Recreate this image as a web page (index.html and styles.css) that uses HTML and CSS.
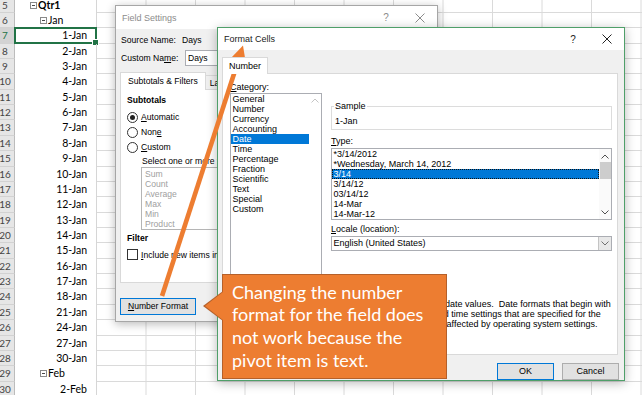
FILE: index.html
```html
<!DOCTYPE html>
<html>
<head>
<meta charset="utf-8">
<title>Format Cells</title>
<link rel="stylesheet" href="styles.css">
</head>
<body>
<div class="sheet">
  <div class="row"><div class="rh">5</div><div class="ca lvl0"><i class="mbox"></i><b>Qtr1</b></div><div class="rest"></div></div>
  <div class="row"><div class="rh">6</div><div class="ca lvl1"><i class="mbox"></i>Jan</div><div class="rest"></div></div>
  <div class="row"><div class="rh sel">7</div><div class="ca sel">1-Jan</div><div class="rest"></div></div>
  <div class="row"><div class="rh">8</div><div class="ca">2-Jan</div><div class="rest"></div></div>
  <div class="row"><div class="rh">9</div><div class="ca">3-Jan</div><div class="rest"></div></div>
  <div class="row"><div class="rh">10</div><div class="ca">4-Jan</div><div class="rest"></div></div>
  <div class="row"><div class="rh">11</div><div class="ca">5-Jan</div><div class="rest"></div></div>
  <div class="row"><div class="rh">12</div><div class="ca">6-Jan</div><div class="rest"></div></div>
  <div class="row"><div class="rh">13</div><div class="ca">7-Jan</div><div class="rest"></div></div>
  <div class="row"><div class="rh">14</div><div class="ca">8-Jan</div><div class="rest"></div></div>
  <div class="row"><div class="rh">15</div><div class="ca">9-Jan</div><div class="rest"></div></div>
  <div class="row"><div class="rh">16</div><div class="ca">10-Jan</div><div class="rest"></div></div>
  <div class="row"><div class="rh">17</div><div class="ca">11-Jan</div><div class="rest"></div></div>
  <div class="row"><div class="rh">18</div><div class="ca">12-Jan</div><div class="rest"></div></div>
  <div class="row"><div class="rh">19</div><div class="ca">13-Jan</div><div class="rest"></div></div>
  <div class="row"><div class="rh">20</div><div class="ca">14-Jan</div><div class="rest"></div></div>
  <div class="row"><div class="rh">21</div><div class="ca">15-Jan</div><div class="rest"></div></div>
  <div class="row"><div class="rh">22</div><div class="ca">16-Jan</div><div class="rest"></div></div>
  <div class="row"><div class="rh">23</div><div class="ca">17-Jan</div><div class="rest"></div></div>
  <div class="row"><div class="rh">24</div><div class="ca">18-Jan</div><div class="rest"></div></div>
  <div class="row"><div class="rh">25</div><div class="ca">21-Jan</div><div class="rest"></div></div>
  <div class="row"><div class="rh">26</div><div class="ca">24-Jan</div><div class="rest"></div></div>
  <div class="row"><div class="rh">27</div><div class="ca">27-Jan</div><div class="rest"></div></div>
  <div class="row"><div class="rh">28</div><div class="ca">30-Jan</div><div class="rest"></div></div>
  <div class="row"><div class="rh">29</div><div class="ca lvl1"><i class="mbox"></i>Feb</div><div class="rest"></div></div>
  <div class="row"><div class="rh">30</div><div class="ca">2-Feb</div><div class="rest"></div></div>
</div>

<section class="dlg fs">
  <header class="tb">
    <span class="ttl">Field Settings</span>
    <span class="tbtn">?</span>
    <span class="tbtn"><svg width="10" height="10" viewBox="0 0 10 10"><path d="M0.5 0.5L9.5 9.5M9.5 0.5L0.5 9.5" stroke="#8c8c8c" stroke-width="1" fill="none"/></svg></span>
  </header>
  <div class="fsbody">
    <div class="fld"><span class="lbl src">Source Name:</span><span>Days</span></div>
    <div class="fld cn"><span class="lbl cus">Custom Na<u>m</u>e:</span><span class="tbox">Days</span></div>
    <div class="tabs"><span class="tab on">Subtotals &amp; Filters</span><span class="tab">Layout &amp; Print</span></div>
    <div class="panel fsp">
      <div class="hd">Subtotals</div>
      <div class="radio on"><i></i><span><u>A</u>utomatic</span></div>
      <div class="radio"><i></i><span>Non<u>e</u></span></div>
      <div class="radio"><i></i><span><u>C</u>ustom</span></div>
      <div class="sel1">Select one or more functions:</div>
      <ul class="flist">
        <li>Sum</li><li>Count</li><li>Average</li><li>Max</li><li>Min</li><li>Product</li>
      </ul>
      <div class="hd flt">Filter</div>
      <div class="chk"><i></i><span><u>I</u>nclude new items in manual filter</span></div>
    </div>
    <button class="btn focus nf"><u>N</u>umber Format</button>
  </div>
</section>

<section class="dlg fc">
  <header class="tb">
    <span class="ttl">Format Cells</span>
    <span class="tbtn">?</span>
    <span class="tbtn"><svg width="10" height="10" viewBox="0 0 10 10"><path d="M0.5 0.5L9.5 9.5M9.5 0.5L0.5 9.5" stroke="#222" stroke-width="1" fill="none"/></svg></span>
  </header>
  <div class="fcbody">
    <div class="tabs"><span class="tab on">Number</span></div>
    <div class="panel fcp">
      <div class="top">
        <div class="lcol">
          <div class="lbl"><u>C</u>ategory:</div>
          <div class="lb cat">
            <ul>
              <li>General</li><li>Number</li><li>Currency</li><li>Accounting</li>
              <li class="hi">Date</li><li>Time</li><li>Percentage</li><li>Fraction</li>
              <li>Scientific</li><li>Text</li><li>Special</li><li>Custom</li>
            </ul>
            <div class="sb dis">
              <svg class="chev" width="8" height="5" viewBox="0 0 8 5"><path d="M0.5 4.5L4 1L7.5 4.5" stroke="#c4c4c4" fill="none"/></svg>
            </div>
          </div>
        </div>
        <div class="rcol">
          <fieldset class="sample"><legend>Sample</legend><div class="sv">1-Jan</div></fieldset>
          <div class="lbl tlbl"><u>T</u>ype:</div>
          <div class="lb types">
            <ul>
              <li>*3/14/2012</li>
              <li>*Wednesday, March 14, 2012</li>
              <li class="hi foc">3/14</li>
              <li>3/14/12</li>
              <li>03/14/12</li>
              <li>14-Mar</li>
              <li>14-Mar-12</li>
            </ul>
            <div class="sb">
              <svg class="chev" width="8" height="5" viewBox="0 0 8 5"><path d="M0.5 4.5L4 1L7.5 4.5" stroke="#505050" fill="none"/></svg>
              <div class="thumb"></div>
              <svg class="chev dn" width="8" height="5" viewBox="0 0 8 5"><path d="M0.5 0.5L4 4L7.5 0.5" stroke="#505050" fill="none"/></svg>
            </div>
          </div>
          <div class="lbl llbl"><u>L</u>ocale (location):</div>
          <div class="combo">
            <span class="cv">English (United States)</span>
            <span class="dd"><svg width="8" height="5" viewBox="0 0 8 5"><path d="M0.5 0.5L4 4L7.5 0.5" stroke="#707070" fill="none"/></svg></span>
          </div>
        </div>
      </div>
      <p class="desc">Date formats display date and time serial numbers as date values.&nbsp; Date formats that begin with<br>an asterisk (*) respond to changes in regional date and time settings that are specified for the<br>operating system. Formats without an asterisk are not affected by operating system settings.</p>
    </div>
    <div class="btns"><button class="btn focus">OK</button><button class="btn">Cancel</button></div>
  </div>
</section>

<svg class="arrow" width="642" height="395" viewBox="0 0 642 395">
  <line x1="162" y1="296" x2="238.4" y2="60.3" stroke="#ED7D31" stroke-width="4.6"/>
  <polygon points="243,45.5 245.8,62.8 231,58" fill="#ED7D31"/>
</svg>

<div class="callout">Changing the number format for the field does not work because the pivot item is text.</div>
</body>
</html>
```

FILE: styles.css
```css
* { box-sizing: border-box; margin: 0; padding: 0; }
html, body { width: 642px; height: 395px; overflow: hidden; background: #fff; }
body { position: relative; font-family: "Liberation Sans", Arial, sans-serif; color: #000; }

/* ---------- spreadsheet ---------- */
.sheet { margin-top: -2.4px; }
.row { display: flex; height: 15.36px; }
.rh {
  flex: none; width: 19px; margin-left: -4px;
  background: #e6e6e6; border-right: 1px solid #bcbcbc; border-bottom: 1px solid #d2d2d2;
  font: 10px/14.5px Lato, sans-serif; color: #444; text-align: center;
}
.rh.sel { background: #d3d3d3; color: #217346; }
.ca {
  flex: none; width: 82px; position: relative;
  border-right: 1px solid #d6d6d6;
  font: 10.5px/15.36px Lato, sans-serif; color: #000;
  text-align: right; padding-right: 9px; white-space: nowrap;
}
.ca.lvl0, .ca.lvl1 { display: flex; align-items: center; text-align: left; }
.ca.lvl0 { padding-left: 14.5px; }
.ca.lvl1 { padding-left: 24.5px; }
.mbox {
  display: inline-block; position: relative; width: 7px; height: 7px;
  border: 1px solid #8a8a8a; background: #fff; margin-right: 1.5px;
}
.mbox::after { content: ""; position: absolute; left: 1px; top: 2px; width: 3px; height: 1px; background: #4a4a4a; }
.ca.sel::before {
  content: ""; position: absolute; left: -1px; top: -1.5px; right: -1px; bottom: -0.5px;
  border: 2px solid #217346;
}
.ca.sel::after {
  content: ""; position: absolute; right: -2.5px; bottom: -2.5px; width: 5px; height: 5px;
  background: #217346; border: 1px solid #fff;
}
.rest {
  flex: 1; border-bottom: 1px solid #dadada;
  background-image: linear-gradient(to left, #dadada 1px, transparent 1px);
  background-size: 49.5px 100%;
}

/* ---------- dialogs common ---------- */
.dlg { position: absolute; background: #f0f0f0; overflow: hidden; }
.tb { display: flex; align-items: center; background: #fff; }
.ttl { flex: 1; }
.tbtn { width: 34px; text-align: center; display: flex; justify-content: center; align-items: center; }
.tabs { display: flex; align-items: flex-end; }
.tab { display: block; }
.panel { background: #fff; border: 1px solid #d9d9d9; }
u { text-decoration: underline; text-underline-offset: 1px; }
.btn {
  display: block; font-family: "Liberation Sans", Arial, sans-serif; color: #000;
  background: #e1e1e1; border: 1px solid #adadad; text-align: center;
}
.btn.focus { border-color: #0078d7; }

/* ---------- Field Settings ---------- */
.fs {
  left: 115px; top: 5px; width: 323px; height: 317px;
  border: 1px solid #a6a6a6; box-shadow: 0 2px 9px rgba(0,0,0,.28);
  font-size: 8.6px;
}
.fs .tb { height: 23px; padding-left: 6px; font-size: 9px; color: #8c8c8c; }
.fs .tbtn { color: #8c8c8c; font-size: 10px; }
.fsbody { padding-left: 4px; }
.fld { display: flex; align-items: center; padding-left: 1px; white-space: nowrap; }
.fld:first-child { height: 12px; margin-top: 5px; }
.fld.cn { height: 16px; margin-top: 4px; }
.lbl.src { width: 61px; }
.lbl.cus { width: 64px; }
.tbox {
  width: 150px; height: 16px; line-height: 14px; padding-left: 2px;
  background: #fff; border: 1px solid #abadb3;
}
.fs .tabs { margin-top: 7px; height: 17px; }
.fs .tab { white-space: nowrap; }
.fs .tab.on {
  height: 18px; line-height: 17px; padding: 0 7px; background: #fff;
  border: 1px solid #d9d9d9; border-bottom: none; position: relative; z-index: 1;
}
.fs .tab:not(.on) {
  height: 15px; line-height: 14px; padding: 0 3px 0 4px; border: 1px solid #d9d9d9; border-left: none; border-bottom: none;
}
.fsp { width: 315px; height: 194px; margin-top: -1px; padding: 4px 0 0 6px; }
.hd { font-weight: bold; line-height: 12px; }
.radio, .chk { display: flex; align-items: center; height: 15px; white-space: nowrap; }
.hd + .radio { margin-top: 3.5px; }
.radio i {
  display: block; width: 11px; height: 11px; border: 1px solid #333; border-radius: 50%;
  background: #fff; margin-right: 3px; position: relative;
}
.radio.on i::after {
  content: ""; position: absolute; left: 2px; top: 2px; width: 5px; height: 5px; border-radius: 50%; background: #222;
}
.sel1 { line-height: 12px; padding-left: 15px; white-space: nowrap; }
.flist {
  list-style: none; margin-left: 14px; width: 160px; height: 63px; padding-top: 1.5px;
  border: 1px solid #b5b5b5; background: #fff; color: #a0a0a0;
}
.flist li { line-height: 10px; padding-left: 3px; }
.hd.flt { margin-top: 2px; }
.chk { height: 14px; margin-top: 4px; }
.chk i { display: block; width: 11px; height: 11px; border: 1px solid #333; background: #fff; margin-right: 3px; }
.btn.nf { margin-top: 15px; width: 76px; height: 17px; font-size: 8.6px; line-height: 15px; }

/* ---------- Format Cells ---------- */
.fc {
  left: 217px; top: 27px; width: 408px; height: 354px;
  border: 1px solid #4f9f69; box-shadow: 0 2px 10px rgba(0,0,0,.28);
  font-size: 9px;
}
.fc .tb { height: 22px; padding-left: 6px; font-size: 9px; color: #1a1a1a; }
.fc .tbtn { color: #222; font-size: 10px; }
.fcbody { padding: 0 6px 0 4px; }
.fc .tabs { margin-top: 7px; height: 17px; }
.fc .tab.on {
  width: 46px; height: 17px; line-height: 16px; text-align: center; background: #fff;
  border: 1px solid #d9d9d9; border-bottom: none; position: relative; z-index: 1;
}
.fcp { height: 282px; margin-top: -1px; }
.top { display: flex; gap: 9px; padding: 7px 5px 0 7px; }
.fc .lbl { line-height: 12px; white-space: nowrap; }
.lcol { width: 92px; flex: none; }
.rcol { width: 281px; flex: none; }
.lb { display: flex; background: #fff; border: 1px solid #abadb3; }
.lb ul { list-style: none; flex: 1; }
.lb li { line-height: 10px; padding-left: 1.5px; white-space: nowrap; }
.lb li.hi { background: #0078d7; color: #fff; }
.lb li.foc { outline: 1px dotted #111; outline-offset: -1px; }
.sb { width: 12px; flex: none; display: flex; flex-direction: column; align-items: center; background: #fafafa; }
.chev { display: block; margin-top: 4px; }
.lb.cat { height: 199px; }
.lb.cat .sb { background: #fff; }
.sample {
  margin-top: 19px; border: 1px solid #dcdcdc; padding: 0 3px 1px 3px; height: 30px;
}
.sample legend { padding: 0 1px; margin-left: -1px; line-height: 12px; }
.sv { line-height: 12px; margin-top: 3px; }
.tlbl { margin-top: 5px; }
.lb.types { height: 72px; margin-top: 1px; }
.types .sb { padding-top: 1px; }
.types .thumb { width: 11px; height: 17px; background: #cdcdcd; margin-top: 3px; }
.types .chev.dn { margin-top: auto; margin-bottom: 4px; }
.llbl { margin-top: 3px; }
.combo {
  display: flex; height: 15px; margin-top: 1px; background: #fff; border: 1px solid #abadb3;
}
.combo .cv { flex: 1; line-height: 13px; padding-left: 1.5px; }
.combo .dd {
  width: 13px; display: flex; align-items: center; justify-content: center;
  background: #e8e8e8; border-left: 1px solid #c4c4c4;
}
.desc { margin: 7px 0 0 7px; line-height: 10px; white-space: nowrap; }
.btns { display: flex; justify-content: flex-end; gap: 8px; margin: 8px -1px 0 0; }
.btns .btn { width: 57px; height: 17px; font-size: 9px; line-height: 15px; }

/* ---------- annotation overlay ---------- */
.arrow { position: absolute; left: 0; top: 0; }
.callout {
  position: absolute; left: 222px; top: 274px; width: 225px; height: 105px;
  background: #ED7D31; border: 1px solid #B5602A;
  color: #fff; font: 18px/22.7px Lato, "Liberation Sans", sans-serif;
  padding: 5.5px 6px 0 9px;
}
.callout::before {
  content: ""; position: absolute; left: -20px; top: 16px; width: 0; height: 0;
  border-top: 15px solid transparent; border-bottom: 15px solid transparent;
  border-right: 20px solid #B5602A;
}
.callout::after {
  content: ""; position: absolute; left: -18.3px; top: 16.9px; width: 0; height: 0;
  border-top: 14.1px solid transparent; border-bottom: 14.1px solid transparent;
  border-right: 18.8px solid #ED7D31;
}
```
